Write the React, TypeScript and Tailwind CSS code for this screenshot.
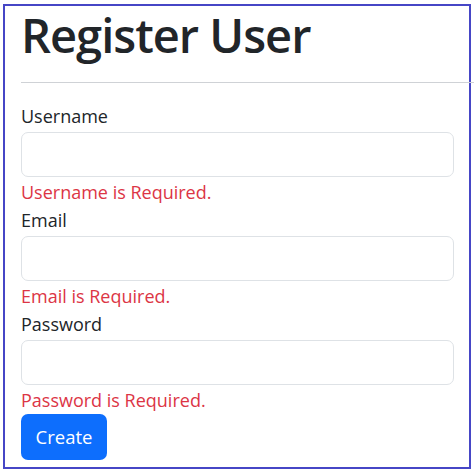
export default function App() {
  const fields = [
    { label: 'Username', type: 'text', error: 'Username is Required.' },
    { label: 'Email', type: 'email', error: 'Email is Required.' },
    { label: 'Password', type: 'password', error: 'Password is Required.' },
  ];

  return (
    <div className="w-[474px] h-[474px] bg-white pl-[3px] pt-[4px] font-['Open_Sans',sans-serif] text-[#212529]">
      <div className="w-[468px] h-[465px] border-2 border-[#4646c6] pl-[16px] pr-[15px]">
        <h1 className="h-[76px] text-[47px] leading-[58px] font-semibold tracking-[-1px]">Register User</h1>
        <hr className="mr-[-20px] border-t border-[#cfd2d6]" />
        <form className="pt-[19px]" onSubmit={(e) => e.preventDefault()}>
          {fields.map((f) => (
            <div key={f.label}>
              <label className="block h-[30px] text-[18px] leading-[28px]">{f.label}</label>
              <input
                type={f.type}
                className="block w-full h-[45px] rounded-[7px] border border-[#dee2e6] px-3 outline-none"
              />
              <div className="h-[29px] text-[18px] leading-[30px] text-[#dc3545]">{f.error}</div>
            </div>
          ))}
          <button
            type="submit"
            className="w-[86px] h-[46px] rounded-[7px] bg-[#0d6efd] text-white text-[18.5px]"
          >
            Create
          </button>
        </form>
      </div>
    </div>
  );
}
